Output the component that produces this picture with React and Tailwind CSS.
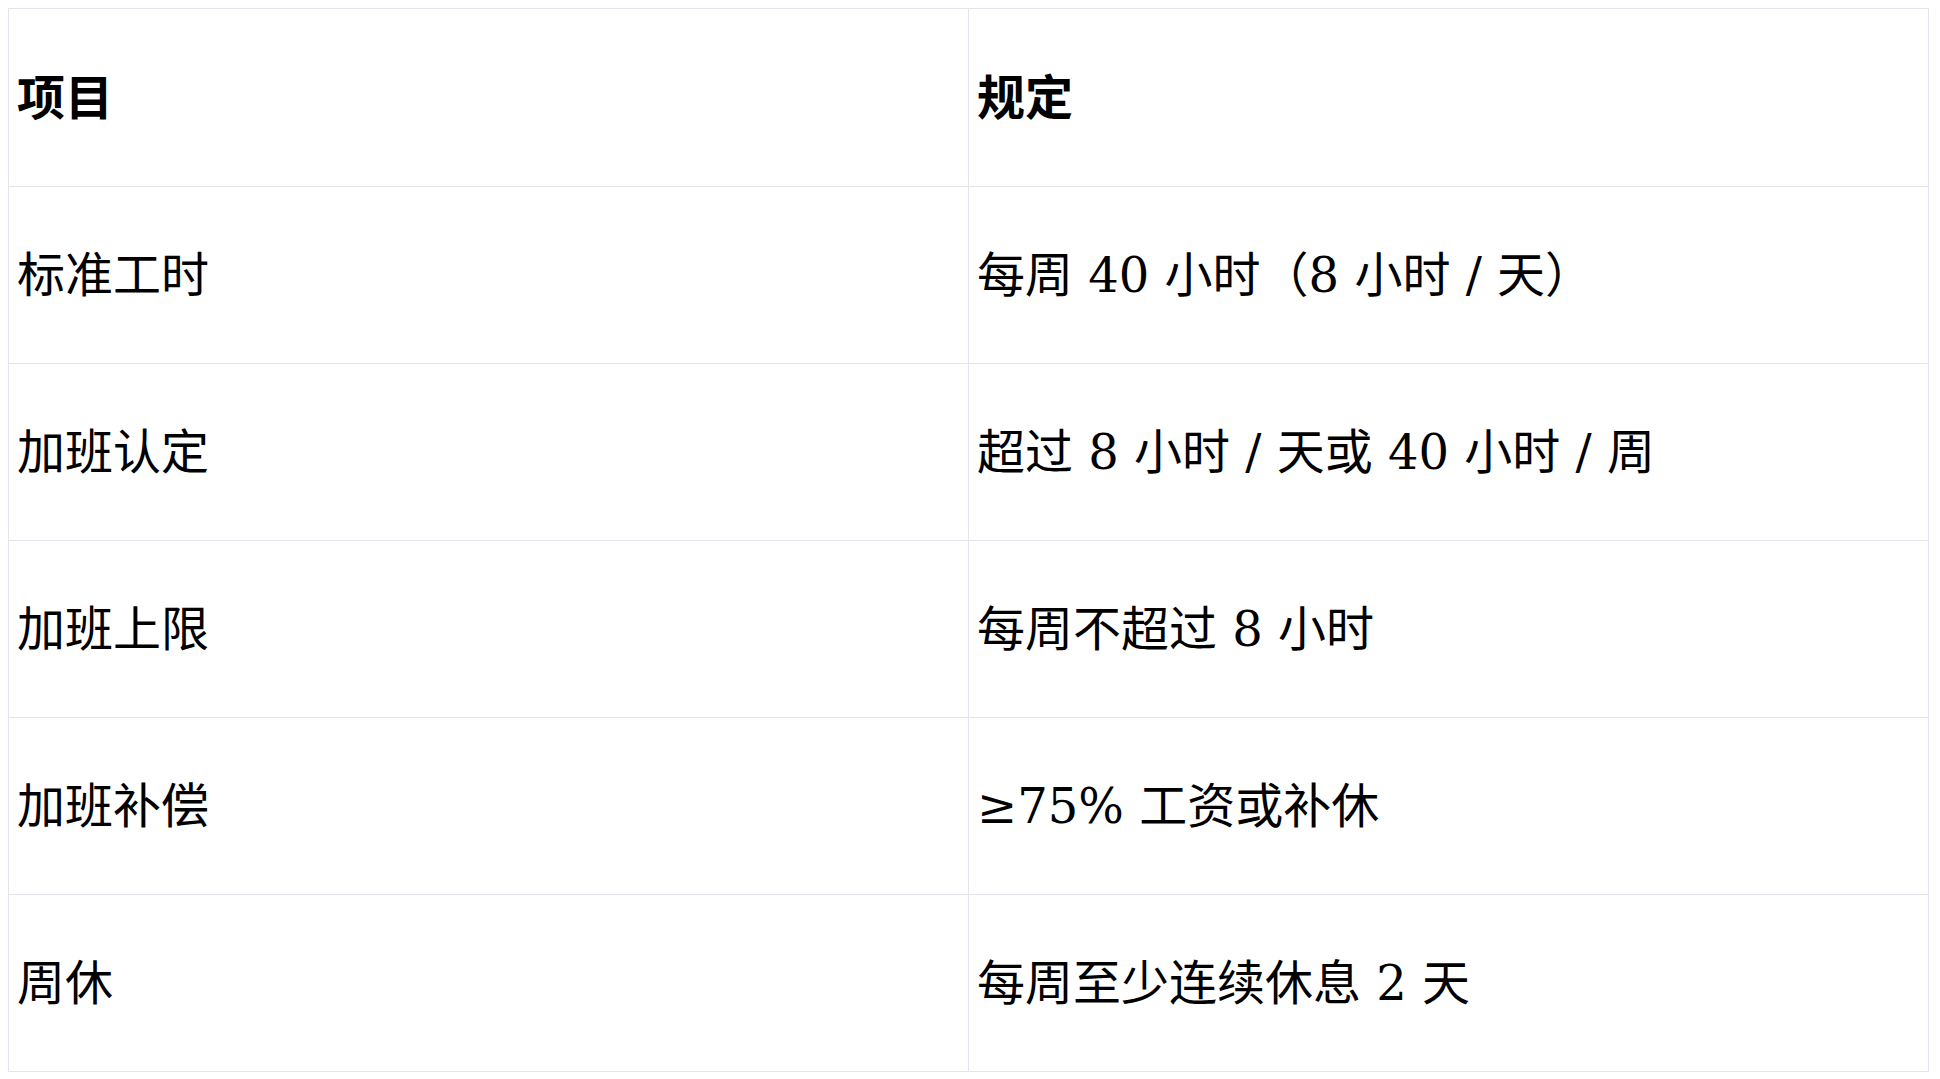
import React from 'react';

const rows = [
  { item: '标准工时', rule: '每周 40 小时（8 小时 / 天）' },
  { item: '加班认定', rule: '超过 8 小时 / 天或 40 小时 / 周' },
  { item: '加班上限', rule: '每周不超过 8 小时' },
  { item: '加班补偿', rule: '≥75% 工资或补休' },
  { item: '周休', rule: '每周至少连续休息 2 天' },
];

const App = () => {
  return (
    <div
      className="p-2 bg-white text-black"
      style={{ fontFamily: '"DejaVu Serif", "Noto Sans CJK SC", serif' }}
    >
      <table className="w-[1921px] border-collapse border border-[#e4e4ec] text-[48px]">
        <thead>
          <tr className="h-[178px]">
            <th className="w-[960px] border border-[#e4e4ec] px-2 text-left align-middle font-bold">项目</th>
            <th className="border border-[#e4e4ec] px-2 text-left align-middle font-bold">规定</th>
          </tr>
        </thead>
        <tbody>
          {rows.map((row) => (
            <tr key={row.item} className="h-[177px]">
              <td className="border border-[#e4e4ec] px-2 align-middle">{row.item}</td>
              <td className="border border-[#e4e4ec] px-2 align-middle">{row.rule}</td>
            </tr>
          ))}
        </tbody>
      </table>
    </div>
  );
};

export default App;
